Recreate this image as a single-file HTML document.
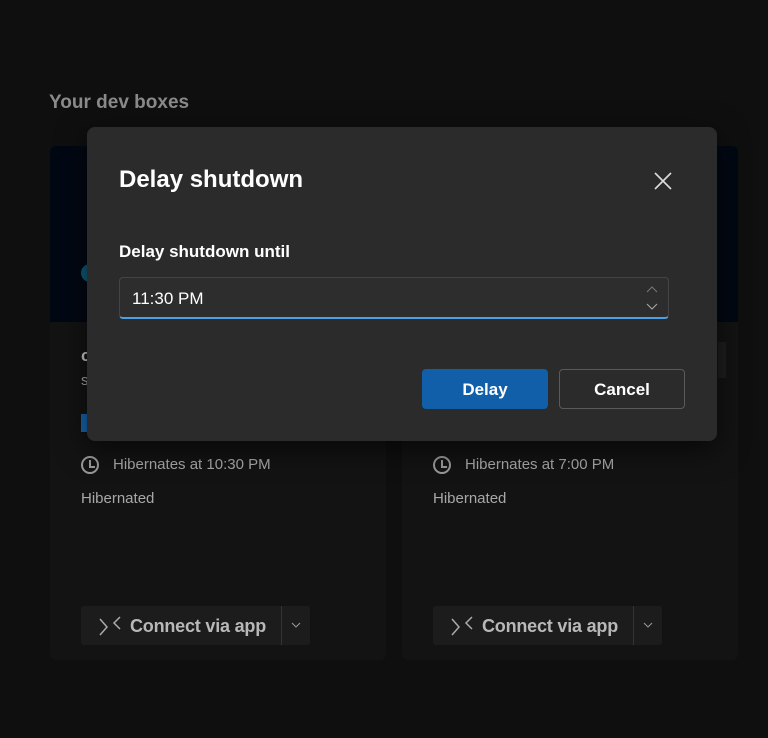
<!DOCTYPE html>
<html><head><meta charset="utf-8"><style>
*{box-sizing:border-box;margin:0;padding:0}
body{width:768px;height:738px;background:#0f0f0f;font-family:"Liberation Sans",sans-serif;position:relative;overflow:hidden;color:#fff}
.h{position:absolute;left:49px;top:92px;font-size:19px;font-weight:bold;color:#8a8a8a}
.card{position:absolute;top:146px;width:336px;height:514px;background:#131313;border-radius:6px;overflow:hidden}
.banner{position:absolute;left:0;top:0;width:100%;height:176px;background:#020813}
.t{position:absolute;font-size:15px;color:#a8a8a8;white-space:nowrap}
.clock{position:absolute;width:18px;height:18px;border:2px solid #9a9a9a;border-radius:50%}
.clock:after{content:"";position:absolute;left:6px;top:2px;width:4px;height:6px;border-left:2px solid #9a9a9a;border-bottom:2px solid #9a9a9a}
.btn{position:absolute;height:39px;background:#1c1c1c;border-radius:3px}
.btn .l{position:absolute;left:49px;top:10px;font-size:18px;font-weight:bold;color:#b8b8b8;letter-spacing:-0.2px}
.btn .sep{position:absolute;left:200px;top:0;width:1px;height:39px;background:#333}
.dlg{position:absolute;left:87px;top:127px;width:630px;height:314px;background:#2b2b2b;border-radius:8px;box-shadow:0 8px 30px rgba(0,0,0,.6)}
.inp{position:absolute;left:32px;top:150px;width:550px;height:42px;background:#2d2d2d;border:1px solid #444;border-radius:4px;border-bottom:2px solid #4a9fe6}
.b1{position:absolute;left:335px;top:242px;width:126px;height:40px;background:#105fa8;border-radius:4px;text-align:center;line-height:42px;font-size:17px;font-weight:bold}
.b2{position:absolute;left:472px;top:242px;width:126px;height:40px;border:1px solid #5a5a5a;border-radius:4px;text-align:center;line-height:40px;font-size:17px;font-weight:bold}
</style></head><body>
<div class="h">Your dev boxes</div>

<div class="card" style="left:50px">
 <div class="banner"></div>
 <div style="position:absolute;left:31px;top:118px;width:14px;height:18px;background:#0d5a7a;border-radius:9px 0 0 9px"></div>
 <div class="t" style="left:31px;top:200px;font-weight:bold;color:#ccc;font-size:17px">c</div>
 <div class="t" style="left:31px;top:226px">s</div>
 <div style="position:absolute;left:31px;top:268px;width:8px;height:18px;background:#1565b0"></div>
 <div class="clock" style="left:31px;top:310px"></div>
 <div class="t" style="left:63px;top:310px">Hibernates at 10:30 PM</div>
 <div class="t" style="left:31px;top:344px">Hibernated</div>
 <div class="btn" style="left:31px;top:460px;width:229px">
  <svg style="position:absolute;left:17px;top:10px" width="24" height="20" viewBox="0 0 24 20"><path d="M2 3l7 8-7 8M22 1l-6 6 6 6" stroke="#aaa" stroke-width="1.5" fill="none"/></svg>
  <div class="l">Connect via app</div><div class="sep"></div>
  <svg style="position:absolute;left:210px;top:16px" width="10" height="6"><path d="M1 1l4 4 4-4" stroke="#999" fill="none"/></svg>
 </div>
</div>

<div class="card" style="left:402px">
 <div class="banner"></div>
 <div style="position:absolute;left:316px;top:196px;width:8px;height:36px;background:#1e1e1e"></div>
 <div class="clock" style="left:31px;top:310px"></div>
 <div class="t" style="left:63px;top:310px">Hibernates at 7:00 PM</div>
 <div class="t" style="left:31px;top:344px">Hibernated</div>
 <div class="btn" style="left:31px;top:460px;width:229px">
  <svg style="position:absolute;left:17px;top:10px" width="24" height="20" viewBox="0 0 24 20"><path d="M2 3l7 8-7 8M22 1l-6 6 6 6" stroke="#aaa" stroke-width="1.5" fill="none"/></svg>
  <div class="l">Connect via app</div><div class="sep"></div>
  <svg style="position:absolute;left:210px;top:16px" width="10" height="6"><path d="M1 1l4 4 4-4" stroke="#999" fill="none"/></svg>
 </div>
</div>

<div class="dlg">
 <div style="position:absolute;left:32px;top:39px;font-size:24px;font-weight:bold">Delay shutdown</div>
 <svg style="position:absolute;left:566px;top:44px" width="20" height="20"><path d="M2 2l16 16M18 2L2 18" stroke="#ddd" stroke-width="1.6"/></svg>
 <div style="position:absolute;left:32px;top:115px;font-size:17px;font-weight:bold">Delay shutdown until</div>
 <div class="inp">
  <div style="position:absolute;left:12px;top:11px;font-size:17px">11:30 PM</div>
  <svg style="position:absolute;left:525px;top:5px" width="14" height="30"><path d="M2 9l5-5 5 5" stroke="#777" fill="none"/><path d="M2 21l5 5 5-5" stroke="#aaa" fill="none"/></svg>
 </div>
 <div class="b1">Delay</div>
 <div class="b2">Cancel</div>
</div>
</body></html>
